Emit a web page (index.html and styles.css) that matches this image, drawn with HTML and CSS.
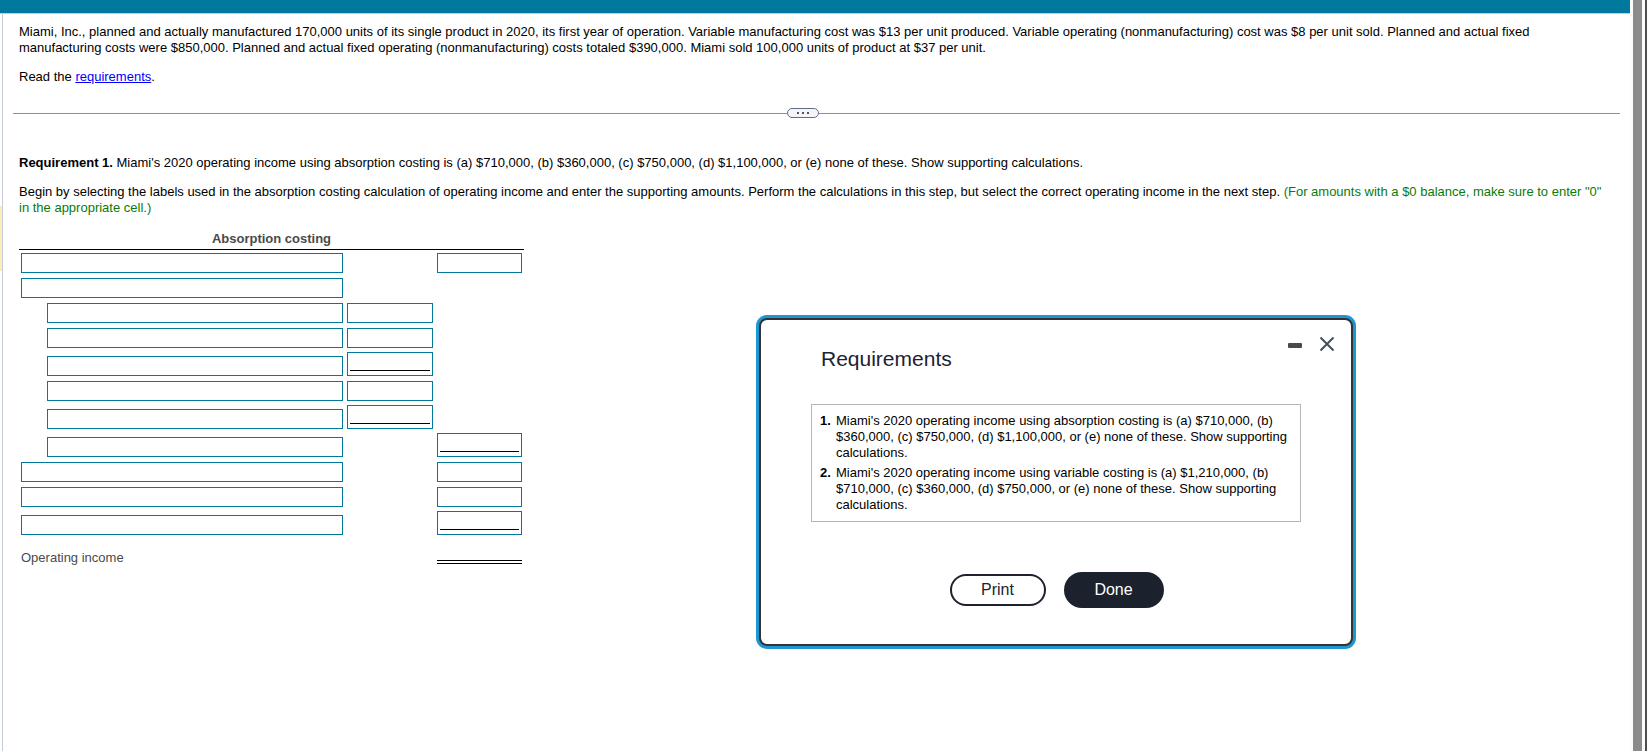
FILE: index.html
```
<!DOCTYPE html>
<html lang="en">
<head>
<meta charset="utf-8">
<title>Absorption costing</title>
<link rel="stylesheet" href="styles.css">
</head>
<body>
<div class="app">
  <div class="pane">
    <header class="topbar"></header>
    <div class="body">
      <aside class="rail"><div class="rail-mark"></div></aside>
      <main class="content">
        <section class="problem">
          <p>Miami, Inc., planned and actually manufactured 170,000 units of its single product in 2020, its first year of operation. Variable manufacturing cost was $13 per unit produced. Variable operating (nonmanufacturing) cost was $8 per unit sold. Planned and actual fixed<br>manufacturing costs were $850,000. Planned and actual fixed operating (nonmanufacturing) costs totaled $390,000. Miami sold 100,000 units of product at $37 per unit.</p>
          <p>Read the <a href="#requirements">requirements</a>.</p>
        </section>
        <div class="splitter">
          <span class="line line-start"></span>
          <button class="grip" type="button" aria-label="Resize panels"><i></i><i></i><i></i></button>
          <span class="line line-end"></span>
        </div>
        <section class="work">
          <p><b>Requirement 1.</b> Miami's 2020 operating income using absorption costing is (a) $710,000, (b) $360,000, (c) $750,000, (d) $1,100,000, or (e) none of these. Show supporting calculations.</p>
          <p>Begin by selecting the labels used in the absorption costing calculation of operating income and enter the supporting amounts. Perform the calculations in this step, but select the correct operating income in the next step. <span class="hint">(For amounts with a $0 balance, make sure to enter "0"<br>in the appropriate cell.)</span></p>
          <table class="sheet">
            <colgroup><col class="col-label"><col class="col-inner"><col class="col-outer"></colgroup>
            <thead><tr><th colspan="3">Absorption costing</th></tr></thead>
            <tbody>
              <tr><td><select aria-label="Label 1"><option></option></select></td><td></td><td><input type="text" aria-label="Amount 1"></td></tr>
              <tr><td><select aria-label="Label 2"><option></option></select></td><td></td><td></td></tr>
              <tr><td class="indent"><select aria-label="Label 3"><option></option></select></td><td><input type="text" aria-label="Amount 3"></td><td></td></tr>
              <tr><td class="indent"><select aria-label="Label 4"><option></option></select></td><td><input type="text" aria-label="Amount 4"></td><td></td></tr>
              <tr><td class="indent"><select aria-label="Label 5"><option></option></select></td><td><div class="total"><input type="text" aria-label="Amount 5"></div></td><td></td></tr>
              <tr><td class="indent"><select aria-label="Label 6"><option></option></select></td><td><input type="text" aria-label="Amount 6"></td><td></td></tr>
              <tr><td class="indent"><select aria-label="Label 7"><option></option></select></td><td><div class="total"><input type="text" aria-label="Amount 7"></div></td><td></td></tr>
              <tr><td class="indent"><select aria-label="Label 8"><option></option></select></td><td></td><td><div class="total"><input type="text" aria-label="Amount 8"></div></td></tr>
              <tr><td><select aria-label="Label 9"><option></option></select></td><td></td><td><input type="text" aria-label="Amount 9"></td></tr>
              <tr><td><select aria-label="Label 10"><option></option></select></td><td></td><td><input type="text" aria-label="Amount 10"></td></tr>
              <tr><td><select aria-label="Label 11"><option></option></select></td><td></td><td><div class="total"><input type="text" aria-label="Amount 11"></div></td></tr>
              <tr class="result"><td>Operating income</td><td></td><td><div class="double-rule"></div></td></tr>
            </tbody>
          </table>
        </section>
      </main>
    </div>
  </div>
  <div class="scroll-track"><div class="scroll-thumb"></div></div>
  <div class="window-edge"></div>
</div>

<div class="dialog" id="requirements" role="dialog" aria-labelledby="dialog-title">
  <div class="dialog-head">
    <h2 id="dialog-title">Requirements</h2>
    <div class="dialog-tools">
      <button type="button" aria-label="Minimize"><svg width="14" height="16" viewBox="0 0 14 16"><rect y="7" width="14" height="5" rx="1" fill="#4a4a4a"/></svg></button>
      <button type="button" aria-label="Close"><svg width="16" height="16" viewBox="0 0 16 16"><path d="M1.5 1.5 14.5 14.5M14.5 1.5 1.5 14.5" stroke="#44505f" stroke-width="2" fill="none"/></svg></button>
    </div>
  </div>
  <ol class="req-list">
    <li>Miami's 2020 operating income using absorption costing is (a) $710,000, (b) $360,000, (c) $750,000, (d) $1,100,000, or (e) none of these. Show supporting calculations.</li>
    <li>Miami's 2020 operating income using variable costing is (a) $1,210,000, (b) $710,000, (c) $360,000, (d) $750,000, or (e) none of these. Show supporting calculations.</li>
  </ol>
  <div class="dialog-actions">
    <button class="btn btn-outline" type="button">Print</button>
    <button class="btn btn-solid" type="button">Done</button>
  </div>
</div>
</body>
</html>
```

FILE: styles.css
```
* { box-sizing: border-box; }

body {
  margin: 0;
  background: #fff;
  color: #000;
  font: 13px/16px "Liberation Sans", Arial, sans-serif;
}

p { margin: 0 0 13px; }
a { color: #00f; }

.app { display: flex; min-height: 100vh; }
.pane { flex: 1; min-width: 0; display: flex; flex-direction: column; }
.topbar { height: 14px; background: #00799c; border-bottom: 1px solid #b5d3de; }
.body { flex: 1; display: flex; }

.rail { width: 3px; padding-top: 192px; border-right: 1px solid #c5cbdd; }
.rail-mark { height: 65px; background: #fdecb9; }

.content { flex: 1; min-width: 0; padding: 10px 10px 0; }
.problem, .work { padding: 0 6px; }

.splitter { display: flex; align-items: center; margin: 23px 0 37px; }
.line { height: 1px; background: #878fa3; }
.line-start { flex: 774; }
.line-end { flex: 801; }
.grip {
  display: flex;
  align-items: center;
  justify-content: center;
  gap: 3px;
  width: 32px;
  height: 10px;
  padding: 0;
  border: 1px solid #5e6f84;
  border-radius: 5px;
  background: #f4f5fa;
}
.grip i { width: 2px; height: 2px; background: #555; }

.hint { color: #0a7a0a; }

.sheet {
  width: 505px;
  table-layout: fixed;
  border-collapse: separate;
  border-spacing: 0;
  color: #4a4a4a;
}
.col-label { width: 326px; }
.col-inner { width: 90px; }
.sheet th {
  height: 21px;
  padding: 0 0 1px;
  border-bottom: 1px solid #000;
  font-size: 13px;
}
.sheet td { height: 25px; padding: 2px; vertical-align: bottom; }
.sheet td.indent { padding-left: 28px; }

.sheet select, .sheet input {
  display: block;
  appearance: none;
  width: 100%;
  height: 20px;
  margin: 0;
  padding: 0 3px;
  border: 1px solid #00799c;
  border-radius: 0;
  background: #fff;
  font: inherit;
}
.total { height: 24px; padding: 0 2px 4px; border: 1px solid #00799c; }
.sheet .total input { height: 18px; border: 0; border-bottom: 1px solid #000; }
.sheet .result td { height: 31px; }
.double-rule { height: 4px; margin-bottom: 2px; border: solid #000; border-width: 1px 0; }

.scroll-track { width: 15px; padding: 0 3px; background: #fcfcfc; }
.scroll-thumb { height: 100%; background: #8b8b8b; }
.window-edge { width: 2px; background: #4e4e52; }

.dialog {
  position: absolute;
  left: 759px;
  top: 318px;
  width: 594px;
  padding: 16px 14px 36px 50px;
  border: 2px solid #333;
  border-radius: 8px;
  background: #fff;
  box-shadow: 0 0 0 3px #1d96d2;
}
.dialog-head { display: flex; justify-content: space-between; }
.dialog h2 {
  margin: 11px 0 0 10px;
  color: #1c2233;
  font-size: 21px;
  font-weight: 400;
  line-height: 24px;
}
.dialog-tools { display: flex; align-items: flex-start; gap: 17px; padding-right: 2px; }
.dialog-tools button { padding: 0; border: 0; background: none; }
.dialog-tools svg { display: block; }

.req-list {
  margin: 33px 36px 0 0;
  padding: 8px 8px 8px 24px;
  border: 1px solid #b5b5b5;
  counter-reset: req;
  list-style: none;
}
.req-list li { display: flex; margin: 0 0 4px -16px; counter-increment: req; }
.req-list li:last-child { margin-bottom: 0; }
.req-list li::before { content: counter(req) "."; flex: 0 0 16px; font-weight: 700; }

.dialog-actions { display: flex; align-items: center; justify-content: center; gap: 18px; margin: 50px 35px 0 0; }
.btn { border-radius: 18px; font: 16px/20px "Liberation Sans", Arial, sans-serif; }
.btn-outline { width: 96px; height: 32px; border: 2px solid #1e2230; background: #fff; color: #1e2230; }
.btn-solid { width: 100px; height: 36px; border: 0; background: #1c212e; color: #fff; }
```
